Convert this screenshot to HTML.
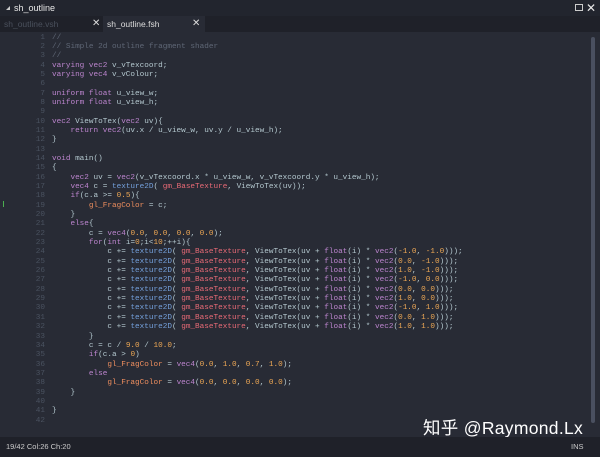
<!DOCTYPE html>
<html><head><meta charset="utf-8"><style>
*{margin:0;padding:0;box-sizing:border-box}
body{width:600px;height:457px;background:#282b35;overflow:hidden;position:relative;font-family:"Liberation Sans",sans-serif}
#title{position:absolute;left:0;top:0;width:600px;height:16px;background:#22252e;color:#e8e8e8;font-size:9px;line-height:16px;padding-left:14px}
#title:before{content:"";position:absolute;left:6px;top:6px;border-left:4px solid transparent;border-bottom:4px solid #ccc}
#tabs{position:absolute;left:0;top:16px;width:600px;height:16px;background:#1f2129}
.tab{position:absolute;top:0;height:16px;font-size:8.5px;line-height:16px}
#code{position:absolute;left:0;top:33.5px;font-family:"Liberation Mono",monospace;font-size:7.7px;line-height:9.34px;color:#b4c8cf;white-space:pre}
.ln{display:inline-block;width:45px;text-align:right;color:#4a5260;margin-right:7px}
.k{color:#bd85cf}.f{color:#74a0dc}.r{color:#e86a76}.n{color:#eea855}.c{color:#5f6776}.g{color:#ee8e5e}
#status{position:absolute;left:0;top:437px;width:600px;height:20px;background:#1f2129;color:#ccc;font-size:7.5px;line-height:20px}
#scroll{position:absolute;left:591px;top:37px;width:4px;height:386px;background:#4a5060;border-radius:2px}
#wm{position:absolute;left:423px;top:415px;color:#fff;font-size:17.5px;letter-spacing:0.3px;font-family:"Liberation Sans","Noto Sans CJK SC",sans-serif}
</style></head><body>
<div id="title">sh_outline<span style="position:absolute;left:575px;top:4px;width:8px;height:7px;border:1px solid #ccc"></span><span style="position:absolute;left:586px;top:0;font-size:12px">✕</span></div>
<div id="tabs">
<div class="tab" style="left:4px;color:#4a505c">sh_outline.vsh</div>
<div class="tab" style="left:92px;color:#ddd;font-size:10px">✕</div>
<div class="tab" style="left:103px;width:102px;background:#282b35;color:#ddd;padding-left:4px">sh_outline.fsh<span style="position:absolute;left:89px;font-size:10px">✕</span></div>
</div>
<div id="code"><span class="ln">1</span><span class="c">//</span>
<span class="ln">2</span><span class="c">// Simple 2d outline fragment shader</span>
<span class="ln">3</span><span class="c">//</span>
<span class="ln">4</span><span class="k">varying vec2</span> v_vTexcoord;
<span class="ln">5</span><span class="k">varying vec4</span> v_vColour;
<span class="ln">6</span>
<span class="ln">7</span><span class="k">uniform float</span> u_view_w;
<span class="ln">8</span><span class="k">uniform float</span> u_view_h;
<span class="ln">9</span>
<span class="ln">10</span><span class="k">vec2</span> ViewToTex(<span class="k">vec2</span> uv){
<span class="ln">11</span>    <span class="k">return vec2</span>(uv.x / u_view_w, uv.y / u_view_h);
<span class="ln">12</span>}
<span class="ln">13</span>
<span class="ln">14</span><span class="k">void</span> main()
<span class="ln">15</span>{
<span class="ln">16</span>    <span class="k">vec2</span> uv = <span class="k">vec2</span>(v_vTexcoord.x * u_view_w, v_vTexcoord.y * u_view_h);
<span class="ln">17</span>    <span class="k">vec4</span> c = <span class="f">texture2D</span>( <span class="r">gm_BaseTexture</span>, ViewToTex(uv));
<span class="ln">18</span>    <span class="k">if</span>(c.a &gt;= <span class="n">0.5</span>){
<span class="ln">19</span>        <span class="g">gl_FragColor</span> = c;
<span class="ln">20</span>    }
<span class="ln">21</span>    <span class="k">else</span>{
<span class="ln">22</span>        c = <span class="k">vec4</span>(<span class="n">0.0</span>, <span class="n">0.0</span>, <span class="n">0.0</span>, <span class="n">0.0</span>);
<span class="ln">23</span>        <span class="k">for</span>(<span class="k">int</span> i=<span class="n">0</span>;i&lt;<span class="n">10</span>;++i){
<span class="ln">24</span>            c += <span class="f">texture2D</span>( <span class="r">gm_BaseTexture</span>, ViewToTex(uv + <span class="k">float</span>(i) * <span class="k">vec2</span>(<span class="n">-1.0</span>, <span class="n">-1.0</span>)));
<span class="ln">25</span>            c += <span class="f">texture2D</span>( <span class="r">gm_BaseTexture</span>, ViewToTex(uv + <span class="k">float</span>(i) * <span class="k">vec2</span>(<span class="n">0.0</span>, <span class="n">-1.0</span>)));
<span class="ln">26</span>            c += <span class="f">texture2D</span>( <span class="r">gm_BaseTexture</span>, ViewToTex(uv + <span class="k">float</span>(i) * <span class="k">vec2</span>(<span class="n">1.0</span>, <span class="n">-1.0</span>)));
<span class="ln">27</span>            c += <span class="f">texture2D</span>( <span class="r">gm_BaseTexture</span>, ViewToTex(uv + <span class="k">float</span>(i) * <span class="k">vec2</span>(<span class="n">-1.0</span>, <span class="n">0.0</span>)));
<span class="ln">28</span>            c += <span class="f">texture2D</span>( <span class="r">gm_BaseTexture</span>, ViewToTex(uv + <span class="k">float</span>(i) * <span class="k">vec2</span>(<span class="n">0.0</span>, <span class="n">0.0</span>)));
<span class="ln">29</span>            c += <span class="f">texture2D</span>( <span class="r">gm_BaseTexture</span>, ViewToTex(uv + <span class="k">float</span>(i) * <span class="k">vec2</span>(<span class="n">1.0</span>, <span class="n">0.0</span>)));
<span class="ln">30</span>            c += <span class="f">texture2D</span>( <span class="r">gm_BaseTexture</span>, ViewToTex(uv + <span class="k">float</span>(i) * <span class="k">vec2</span>(<span class="n">-1.0</span>, <span class="n">1.0</span>)));
<span class="ln">31</span>            c += <span class="f">texture2D</span>( <span class="r">gm_BaseTexture</span>, ViewToTex(uv + <span class="k">float</span>(i) * <span class="k">vec2</span>(<span class="n">0.0</span>, <span class="n">1.0</span>)));
<span class="ln">32</span>            c += <span class="f">texture2D</span>( <span class="r">gm_BaseTexture</span>, ViewToTex(uv + <span class="k">float</span>(i) * <span class="k">vec2</span>(<span class="n">1.0</span>, <span class="n">1.0</span>)));
<span class="ln">33</span>        }
<span class="ln">34</span>        c = c / <span class="n">9.0</span> / <span class="n">10.0</span>;
<span class="ln">35</span>        <span class="k">if</span>(c.a &gt; <span class="n">0</span>)
<span class="ln">36</span>            <span class="g">gl_FragColor</span> = <span class="k">vec4</span>(<span class="n">0.0</span>, <span class="n">1.0</span>, <span class="n">0.7</span>, <span class="n">1.0</span>);
<span class="ln">37</span>        <span class="k">else</span>
<span class="ln">38</span>            <span class="g">gl_FragColor</span> = <span class="k">vec4</span>(<span class="n">0.0</span>, <span class="n">0.0</span>, <span class="n">0.0</span>, <span class="n">0.0</span>);
<span class="ln">39</span>    }
<span class="ln">40</span>
<span class="ln">41</span>}
<span class="ln">42</span></div>
<div style="position:absolute;left:3px;top:201px;width:1px;height:6px;background:#4caf50"></div>
<div id="scroll"></div>
<div id="wm">知乎 @Raymond.Lx</div>
<div id="status"><span style="position:absolute;left:6px">19/42 Col:26 Ch:20</span><span style="position:absolute;left:571px">INS</span></div>
</body></html>
